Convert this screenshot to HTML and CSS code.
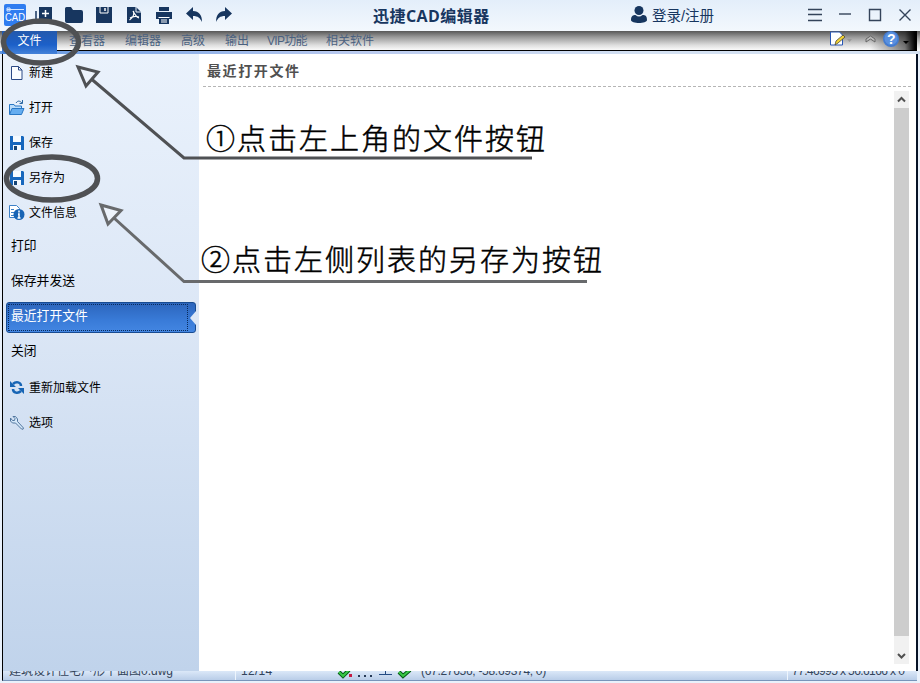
FILE: index.html
```html
<!DOCTYPE html>
<html lang="zh-CN">
<head>
  <meta charset="UTF-8" />
  <meta name="viewport" content="width=device-width, initial-scale=1.0" />
  <title>迅捷CAD编辑器</title>
  <link rel="stylesheet" href="styles.css">
</head>

<body>
  <div class="window">
    <header class="titlebar">
      <div class="quick-tools">
        <svg class="logo" width="22" height="22" viewBox="0 0 22 22">
          <rect width="22" height="22" rx="2" fill="#2f7df0" />
          <path d="M3 5.500h17M3 4h3v3H3z" stroke="#d5e7ff" fill="none" />
          <text x="1" y="17" textLength="20" lengthAdjust="spacingAndGlyphs">CAD</text>
        </svg>
        <svg width="18" height="18" viewBox="0 0 18 18">
          <path d="M4 1h13v13H4z" fill="#17365f" />
          <path d="M1 5v12h13" fill="none" stroke="#17365f" stroke-width="1.500" />
          <path d="M10.500 4v7M7 7.500h7" stroke="#fff" stroke-width="1.500" />
        </svg>
        <svg width="18" height="18" viewBox="0 0 18 18">
          <path d="M0 2.500Q0 1 1.500 1H6l2 3h8q2 0 2 2v9q0 2-2 2H2q-2 0-2-2z" fill="#17365f" />
        </svg>
        <svg width="18" height="18" viewBox="0 0 18 18">
          <path d="M1 1h16v16H1z" fill="#17365f" />
          <path d="M5 1v6h8V1" fill="none" stroke="#fff" />
          <path d="M10 2v3" stroke="#fff" stroke-width="1.500" />
        </svg>
        <svg width="18" height="18" viewBox="0 0 18 18">
          <path d="M2 1h9l5 5v11H2z" fill="#17365f" />
          <path d="M11 1v5h5" fill="none" stroke="#eaf2fc" />
          <path d="M8 5c2 4 3 6 6 7M8.500 5c1 4-1 7-4 9M5 12c3-2 6-2 9-1" fill="none" stroke="#fff" stroke-width="1.200" />
        </svg>
        <svg width="18" height="18" viewBox="0 0 18 18">
          <path d="M4 1h10v4H4zM1 6h16v7H1zM4 11h10v7H4z" fill="#17365f" />
          <path d="M3.500 11.500h11M6 14h6M6 16h6" stroke="#fff" />
        </svg>
        <svg width="18" height="18" viewBox="0 0 18 18">
          <path d="M1 7.500 8 1v4c6 0 9 4 9 11-2-4-4-6-9-6v4z" fill="#17365f" />
        </svg>
        <svg width="18" height="18" viewBox="0 0 18 18">
          <path d="M17 7.500 10 1v4c-6 0-9 4-9 11 2-4 4-6 9-6v4z" fill="#17365f" />
        </svg>
      </div>
      <h1 class="app-title">迅捷CAD编辑器</h1>
      <div class="account">
        <svg width="16" height="17" viewBox="0 0 16 17">
          <circle cx="8" cy="4.500" r="4.500" fill="#17365f" />
          <path d="M0 14c0-4 2-5 4.500-5Q8 12 11.500 9c3 0 4.500 1 4.500 5 0 4-16 4-16 0z" fill="#17365f" />
        </svg>
        <span>登录/注册</span>
      </div>
      <div class="window-buttons">
        <svg width="14" height="14" viewBox="0 0 14 14"><path d="M0 1.500h14M0 6.500h14M0 12.500h14" /></svg>
        <svg width="14" height="14" viewBox="0 0 14 14"><path d="M1 6h12" stroke-width="2" /></svg>
        <svg width="14" height="14" viewBox="0 0 14 14"><path d="M1.500 1.500h11v11h-11z" /></svg>
        <svg width="14" height="14" viewBox="0 0 14 14"><path d="M1.500 1.500 12.500 12.500M12.500 1.500 1.500 12.500" /></svg>
      </div>
    </header>

    <nav class="ribbon">
      <span class="tab tab-active">文件</span>
      <span class="tab">查看器</span>
      <span class="tab">编辑器</span>
      <span class="tab">高级</span>
      <span class="tab">输出</span>
      <span class="tab tab-vip">VIP功能</span>
      <span class="tab">相关软件</span>
      <svg class="ribbon-tools" width="90" height="19" viewBox="0 0 90 19">
        <path d="M5.500 1h9l3 3v10h-12z" fill="#fff" stroke="#2856b5" />
        <path d="m10 14 1-4 7-6 2 2-7 6z" fill="#f3d332" stroke="#4a4636" stroke-width=".8" />
        <path d="m22 8 5 0-2.500 3z" fill="#999" />
        <path d="m41 8 4.500-3 4.500 3v3l-4.500-3-4.500 3z" fill="#bbb" stroke="#666" />
        <circle cx="66" cy="8" r="8" fill="#437bd0" />
        <circle cx="66" cy="7.500" r="6.500" fill="#5990df" />
        <text class="help-mark" x="62" y="13">?</text>
        <path d="M78 10h6l-3 3z" fill="#000" />
      </svg>
    </nav>

    <main class="backstage">
      <aside class="sidebar">
        <div class="item">
          <svg width="16" height="16" viewBox="0 0 16 16">
            <path d="M2.500 1.500H9.500l3.500 3.500v9.500H2.500z" fill="#fbfdff" stroke="#2c4a86" />
            <path d="M9.500 1.500v3.500h3.500" fill="none" stroke="#2c4a86" />
          </svg>
          <span>新建</span>
        </div>
        <div class="item">
          <svg width="16" height="16" viewBox="0 0 16 16">
            <path d="M.5 14V4.500H5l1 1.500h6.500v3" fill="#b9dcfa" stroke="#2877c5" />
            <path d="M.5 14.500 3 8.500h12L12.500 14.500z" fill="#65adf0" stroke="#2877c5" />
            <path d="M7 3c2-3 4-2 6 0M13.500 0v3.500h-3" fill="none" stroke="#27649f" />
          </svg>
          <span>打开</span>
        </div>
        <div class="item">
          <svg width="16" height="16" viewBox="0 0 16 16">
            <path d="M1 1h13l1 1v13H1z" fill="#1767bd" />
            <path d="M4 1h8v6H4zM4 10h8v5H4z" fill="#f5faff" />
            <path d="M5 11h3v4H5z" fill="#164576" />
          </svg>
          <span>保存</span>
        </div>
        <div class="item">
          <svg width="16" height="16" viewBox="0 0 16 16">
            <path d="M1 1h13l1 1v13H1z" fill="#1767bd" />
            <path d="M4 1h8v6H4zM4 10h8v5H4z" fill="#f5faff" />
            <path d="M5 11h3v4H5z" fill="#164576" />
          </svg>
          <span>另存为</span>
        </div>
        <div class="item">
          <svg width="16" height="16" viewBox="0 0 16 16">
            <path d="M.5.5h7l3 3v9h-10z" fill="#fff" stroke="#3d81c7" />
            <path d="M2 4.500h3M2 7.500h3M2 10.500h3" stroke="#3d81c7" />
            <circle cx="10" cy="9.500" r="5.500" fill="#1764b5" />
            <path d="M10 5.500v2M9 9h1v4M8.500 13h3" fill="none" stroke="#fff" stroke-width="1.500" />
          </svg>
          <span>文件信息</span>
        </div>
        <div class="item item-plain">打印</div>
        <div class="item item-plain">保存并发送</div>
        <div class="item item-plain item-selected">
          <span>最近打开文件</span>
        </div>
        <div class="item item-plain">关闭</div>
        <div class="item">
          <svg width="16" height="16" viewBox="0 0 16 16">
            <path d="M4 4c3-3 8-2 8 2M12 11c-3 3-8 2-8-2" fill="none" stroke="#1765b5" stroke-width="2.500" />
            <path d="M1 1v6h6zM15 14V8H9z" fill="#1765b5" />
          </svg>
          <span>重新加载文件</span>
        </div>
        <div class="item">
          <svg width="16" height="16" viewBox="0 0 16 16">
            <path d="M1.500 3v3l2 2h3l6 6q2 1 2-1L8.500 6.500V4l-2-2.500H4L6 3.500 5.500 5.500 3.500 5.500z" fill="#d6e9fa" stroke="#52779f" />
          </svg>
          <span>选项</span>
        </div>
      </aside>

      <section class="recent">
        <h2>最近打开文件</h2>
        <div class="recent-list">
          <div class="scrollbar">
            <svg width="15" height="17" viewBox="0 0 15 17"><path d="m4 10.500 3.500-3.500 3.500 3.500" /></svg>
            <div class="thumb"></div>
            <svg width="15" height="28" viewBox="0 0 15 28"><path d="m4 18 3.500 3.500L11 18" /></svg>
          </div>
        </div>
      </section>
    </main>

    <footer class="statusbar">
      <span class="status-file">建筑设计住宅户形平面图0.dwg</span>
      <span class="status-page">12/14</span>
      <svg class="status-icons" width="80" height="9" viewBox="0 0 80 9">
        <path d="m4 1 4 4 6-6M64 1l4 4 7-6" fill="none" stroke="#075b17" stroke-width="4" />
        <path d="m4 1 4 4 6-6M64 1l4 4 7-6" fill="none" stroke="#38c747" stroke-width="2" />
        <path d="M14 3h3v3h-3z" fill="#c51a42" />
        <path d="M23 4h2v2h-2zM29 4h2v2h-2zM35 4h2v2h-2z" fill="#263a56" />
        <path d="M44 3.500h13M50.500 0v3" stroke="#234b83" />
      </svg>
      <span class="status-coords">(67.27656; -58.69374; 0)</span>
      <span class="status-size">77.46995 x 56.6166 x 0</span>
    </footer>

    <!-- tutorial callouts drawn over the window -->
    <svg class="callouts" width="920" height="683" viewBox="0 0 920 683">
      <g class="callout-first">
        <ellipse cx="41" cy="42" rx="37.500" ry="21" />
        <path d="M92 79.500 184 158h348" />
        <path d="M78 67 98 72 86 86z" class="arrow" />
      </g>
      <g class="callout-second">
        <ellipse cx="52" cy="178.500" rx="45.500" ry="21.500" />
        <path d="M114 218 184 281.500h403" />
        <path d="M101 205 121 210.500 108 224z" class="arrow" />
      </g>
      <text x="206" y="150" textLength="339">①点击左上角的文件按钮</text>
      <text x="201" y="271" textLength="401">②点击左侧列表的另存为按钮</text>
    </svg>
  </div>
</body>
</html>
```
FILE: styles.css
```css
:root {
  --navy: #17365f;
  --tab: #4b617f;
  --line: #4f5154;
}

* {
  box-sizing: border-box;
  margin: 0;
  padding: 0;
}

body {
  font-family: "Liberation Sans", "Noto Sans CJK SC", sans-serif;
  font-size: 12px;
  color: #000;
  overflow: hidden;
}

svg {
  display: block;
  flex: none;
}

.window {
  position: relative;
  display: flex;
  flex-direction: column;
  width: 920px;
  height: 683px;
  background: #e9f1fb;
  overflow: hidden;
}

/* title bar */
.titlebar {
  display: flex;
  height: 31px;
  padding-left: 4px;
  background: linear-gradient(#e3eefa, #f3f8fd);
  color: var(--navy);
}

.quick-tools {
  display: flex;
  gap: 12px;
  width: 369px;
  padding-top: 6px;
}

.quick-tools .logo {
  margin: -2px -3px 0 0;
}

.logo text {
  font-size: 11px;
  fill: #fff;
}

.app-title {
  width: 258px;
  font: bold 16px/33px "Open Sans", "Noto Sans CJK SC", sans-serif;
  letter-spacing: 0.450px;
  white-space: nowrap;
}

.account {
  display: flex;
  align-items: center;
  gap: 5px;
  width: 177px;
  font-size: 14.500px;
}

.account svg {
  margin-top: -2px;
}

.account span {
  margin-top: -2px;
}

.window-buttons {
  display: flex;
  gap: 16px;
  padding-top: 8px;
}

.window-buttons path {
  fill: none;
  stroke: #34445a;
  stroke-width: 1.400;
}

/* ribbon */
.ribbon {
  display: flex;
  height: 23px;
  padding-left: 2px;
  background:
    linear-gradient(90deg, transparent 870px, rgba(0, 0, 0, 0.5) 905px, #000 915px) 0 0 / 917px 19px no-repeat,
    linear-gradient(#000, #000) 57px 19px / 860px 1px no-repeat,
    linear-gradient(90deg, #6296df, #b8c9ef 340px, #d4e1f2 650px) 0 20px / 100% 3px no-repeat,
    linear-gradient(#575757, #999 6px, #ddd 14px, #fafafa 19px);
}

.tab {
  margin-right: 20px;
  line-height: 20px;
  color: var(--tab);
  white-space: nowrap;
}

.tab-active {
  width: 55px;
  height: 23px;
  margin-right: 12px;
  background: linear-gradient(#2359ac, #1c60c9 60%, #4482d9);
  color: #fff;
  text-align: center;
}

.tab-vip {
  width: 40px;
  margin-left: -2px;
  margin-right: 19px;
  letter-spacing: -0.700px;
}

.ribbon-tools {
  margin-left: auto;
  margin-right: 5px;
}

.help-mark {
  font-size: 14px;
  font-weight: bold;
  fill: #fff;
}

/* file menu */
.backstage {
  display: flex;
  height: 617px;
  margin: 0 2px 0 2px;
  border-left: 1px solid #000;
  border-right: 2px solid #061226;
  background: #fff;
}

.sidebar {
  width: 196px;
  padding-top: 1px;
  background: linear-gradient(#eaf2fc, #dce7f6 42%, #c0d3eb);
}

.item {
  display: flex;
  align-items: center;
  gap: 4px;
  height: 35px;
  padding-left: 6px;
  line-height: 18px;
}

.item-plain {
  padding: 0 0 3px 8px;
  font-size: 12.800px;
}

.item-selected {
  position: relative;
  height: 31px;
  margin: 2px 3px 2px 3px;
  padding-left: 4px;
  border: 1px solid #174b91;
  border-radius: 3px;
  background: linear-gradient(#2c65bc, #397bd8 60%, #4386e2);
  color: #fff;
}

.item-selected::before {
  content: "";
  position: absolute;
  inset: 1px 7px 1px 1px;
  border: 1px dotted #092b5b;
}

.item-selected::after {
  content: "";
  position: absolute;
  right: -1px;
  top: 8px;
  border: 7px solid transparent;
  border-right: 6px solid #dce7f6;
  border-left: 0;
}

.recent {
  flex: 1;
  display: flex;
  flex-direction: column;
}

.recent h2 {
  height: 33px;
  margin: 0 5px 0 4px;
  padding-left: 4px;
  border-bottom: 1px dashed #b5b5b5;
  color: #505050;
  font-size: 14px;
  line-height: 34px;
  letter-spacing: 1.600px;
}

.recent-list {
  display: flex;
  justify-content: flex-end;
  flex: 1;
  padding: 4px 7px 0 0;
}

.scrollbar {
  width: 15px;
  height: 573px;
  background: #f1f1f1;
}

.scrollbar path {
  fill: none;
  stroke: #505050;
  stroke-width: 2;
}

.thumb {
  height: 528px;
  background: #cdcdcd;
}

/* the menu covers the upper half of the status text */
.statusbar {
  display: flex;
  height: 10px;
  margin: 0 3px 0 2px;
  padding-left: 6px;
  border-left: 1px solid #000;
  border-bottom: 1px solid #7895ba;
  background: linear-gradient(#dbe8f8, #b9cde8);
  color: #34445a;
  line-height: 18px;
  white-space: nowrap;
  overflow: hidden;
}

.statusbar span {
  height: 18px;
  margin-top: -9px;
}

.status-file {
  width: 227px;
  border-right: 1px solid #eef5fd;
}

.status-page {
  width: 99px;
  padding-left: 5px;
  letter-spacing: 0.300px;
}

.status-coords {
  width: 372px;
  padding-left: 6px;
  letter-spacing: -0.300px;
}

.status-size {
  padding-left: 4px;
  border-left: 1px solid #eef5fd;
  letter-spacing: -0.600px;
}

/* callouts */
.callouts {
  position: absolute;
  left: 0;
  top: 0;
}

.callouts path,
.callouts ellipse {
  fill: none;
  stroke: var(--line);
  stroke-width: 3;
}

.callouts ellipse {
  stroke-width: 5.500;
}

.callout-second path {
  stroke: #686a6c;
}

.callouts .arrow {
  fill: #edf3fb;
}

.callouts text {
  font-family: "Noto Sans CJK SC", sans-serif;
  font-size: 29px;
  font-weight: 300;
  stroke: #000;
  stroke-width: 0.500px;
}
```
